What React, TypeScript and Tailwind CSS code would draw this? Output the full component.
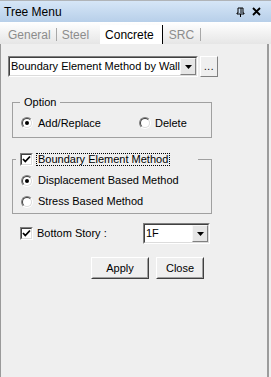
import React from "react";

function Radio({ checked }: { checked?: boolean }) {
  return (
    <span className="relative inline-flex w-[12px] h-[12px] shrink-0 rounded-full border border-t-[#808080] border-l-[#808080] border-b-white border-r-white">
      <span className="flex items-center justify-center w-full h-full rounded-full border border-t-[#404040] border-l-[#404040] border-b-[#dcdcdc] border-r-[#dcdcdc] bg-white">
        {checked && <span className="block w-[4px] h-[4px] rounded-full bg-black" />}
      </span>
    </span>
  );
}

function Check() {
  return (
    <span className="inline-flex w-[13px] h-[13px] shrink-0 border border-t-[#808080] border-l-[#808080] border-b-white border-r-white">
      <span className="flex items-center justify-center w-full h-full border border-t-[#404040] border-l-[#404040] border-b-[#dcdcdc] border-r-[#dcdcdc] bg-white">
        <svg width="9" height="9" viewBox="0 0 9 9">
          <path d="M1 4 L3.3 6.5 L8 1.5" stroke="#000" strokeWidth="1.8" fill="none" />
        </svg>
      </span>
    </span>
  );
}

function ArrowBtn() {
  return (
    <span className="flex items-center justify-center w-[16px] h-full shrink-0 bg-[#e6e6e6] border border-t-[#f8f8f8] border-l-[#f8f8f8] border-b-[#808080] border-r-[#808080]">
      <svg width="7" height="4" viewBox="0 0 7 4">
        <path d="M0 0 H7 L3.5 4 Z" fill="#000" />
      </svg>
    </span>
  );
}

function Combo({ text, w }: { text: string; w: string }) {
  return (
    <div className={`flex h-[21px] ${w} border border-t-[#808080] border-l-[#808080] border-b-white border-r-white`}>
      <div className="flex flex-1 h-full border border-t-[#404040] border-l-[#404040] border-b-[#dcdcdc] border-r-[#dcdcdc] bg-white">
        <span className="flex-1 pl-[1px] leading-[17px] text-[11px] text-black whitespace-nowrap overflow-hidden">{text}</span>
        <ArrowBtn />
      </div>
    </div>
  );
}

function Button({ label, w }: { label: string; w: string }) {
  return (
    <div className={`${w} h-[22px] border border-t-white border-l-white border-b-[#404040] border-r-[#404040]`}>
      <div className="flex items-center justify-center w-full h-full bg-[#efefef] border border-t-[#efefef] border-l-[#efefef] border-b-[#a0a0a0] border-r-[#a0a0a0] text-[11px] text-black">
        {label}
      </div>
    </div>
  );
}

export default function App() {
  return (
    <div className="w-[271px] h-[377px] bg-[#f0f0f0] flex flex-col overflow-hidden font-['Liberation_Sans',Arial,sans-serif] select-none">
      {/* Title bar */}
      <div className="h-[22px] shrink-0 flex items-center border-t border-[#b0b4b8] bg-gradient-to-b from-[#d6e6f7] to-[#b7cfe9] pl-[4px] pr-[10px]">
        <span className="text-[12px] text-black flex-1 leading-none">Tree Menu</span>
        <svg width="9" height="10" viewBox="0 0 9 10" className="mr-[7px]">
          <path d="M2 1 H7 V6 H8 V7 H1 V6 H2 Z M5 1 V6" stroke="#000" strokeWidth="1" fill="none" />
          <path d="M4.5 7 V10" stroke="#000" strokeWidth="1" />
        </svg>
        <svg width="9" height="9" viewBox="0 0 9 9">
          <path d="M1 1 L8 8 M8 1 L1 8" stroke="#000" strokeWidth="1.8" />
        </svg>
      </div>
      {/* Tabs */}
      <div className="h-[22px] shrink-0 flex items-end bg-gradient-to-b from-[#ffffff] to-[#e6e6e6] text-[12px]">
        <div className="flex items-center h-[19px] pl-[8px] text-[#8c8c8c]">
          <span>General</span>
          <span className="w-px h-[13px] bg-[#a8a8a8] mx-[5px]" />
          <span>Steel</span>
        </div>
        <div className="flex items-center h-[19px] ml-[11px] pl-[5px] pr-[8px] bg-white text-black border-r border-black">
          Concrete
        </div>
        <div className="flex items-center h-[19px] pl-[6px] text-[#8c8c8c]">
          <span>SRC</span>
          <span className="w-px h-[13px] bg-[#a8a8a8] ml-[6px]" />
        </div>
      </div>
      {/* Panel */}
      <div className="flex-1 flex flex-col bg-[#efefef] border-l border-[#9a9a9a] mr-[2px] border-r-2 border-r-[#9c9c9c] text-[11px] text-black pt-[12px]">
        <div className="flex items-center pl-[7px] gap-[2px]">
          <Combo text="Boundary Element Method by Wall" w="w-[190px]" />
          <div className="w-[18px] h-[21px] border border-t-white border-l-white border-b-[#808080] border-r-[#808080] bg-[#efefef] flex items-end justify-center pb-[4px]">
            <span className="text-[10px] leading-none tracking-[0.5px]">...</span>
          </div>
        </div>

        {/* Option group */}
        <div className="relative ml-[11px] mt-[25px] w-[200px] h-[36px] border border-[#a0a0a0] flex items-center pt-[6px]">
          <span className="absolute left-[7px] top-[-8px] px-[4px] bg-[#efefef] leading-[14px]">Option</span>
          <div className="flex items-center ml-[8px] gap-[5px] w-[118px]">
            <Radio checked />
            <span>Add/Replace</span>
          </div>
          <div className="flex items-center gap-[4px]">
            <Radio />
            <span>Delete</span>
          </div>
        </div>

        {/* Boundary group */}
        <div className="relative ml-[11px] mt-[21px] w-[200px] h-[55px] border border-[#a0a0a0] flex flex-col pt-[10px]">
          <div className="absolute left-[3px] top-[-7px] w-[182px] h-[13px] pl-[4px] bg-[#efefef] flex items-center gap-[3px]">
            <Check />
            <span className="border border-dotted border-black px-[1px] leading-[11px]">Boundary Element Method</span>
          </div>
          <div className="h-[21px] flex items-center ml-[8px] gap-[5px]">
            <Radio checked />
            <span>Displacement Based Method</span>
          </div>
          <div className="h-[21px] flex items-center ml-[8px] gap-[5px]">
            <Radio />
            <span>Stress Based Method</span>
          </div>
        </div>

        {/* Bottom story */}
        <div className="flex items-center mt-[9px] h-[21px] pl-[19px]">
          <Check />
          <span className="ml-[4px] w-[106px]">Bottom Story :</span>
          <Combo text="1F" w="w-[67px]" />
        </div>

        {/* Buttons */}
        <div className="flex mt-[13px] pl-[90px] gap-[7px]">
          <Button label="Apply" w="w-[58px]" />
          <Button label="Close" w="w-[48px]" />
        </div>
      </div>
    </div>
  );
}
